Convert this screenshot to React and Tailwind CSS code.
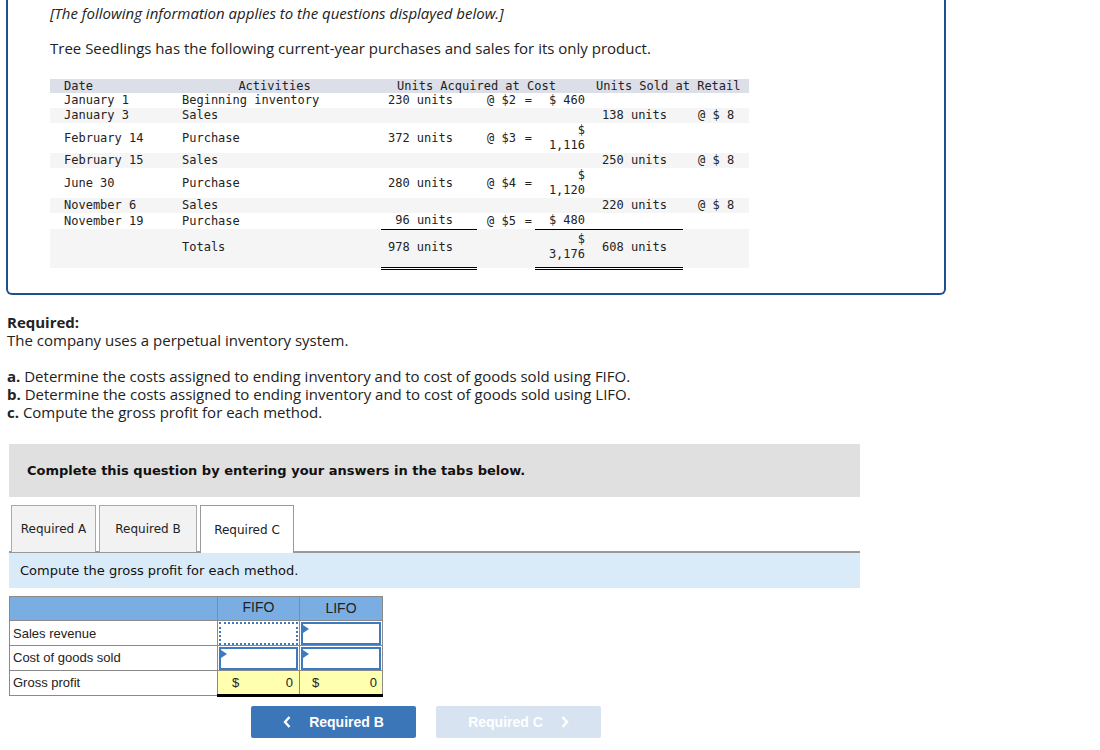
import React from 'react';

const mono = "font-['DejaVu_Sans_Mono',monospace] text-[12px] leading-[15px] text-[#222]";

const rows = [
  { date: 'January 1', act: 'Beginning inventory', units: '230 units', at: '@ $2', cost: ['$ 460'], h: 'h-[15px]', bg: 'bg-white' },
  { date: 'January 3', act: 'Sales', sold: '138 units', retail: '@ $ 8', h: 'h-[15px]', bg: 'bg-[#f5f5f5]' },
  { date: 'February 14', act: 'Purchase', units: '372 units', at: '@ $3', cost: ['$', '1,116'], h: 'h-[30px]', bg: 'bg-white' },
  { date: 'February 15', act: 'Sales', sold: '250 units', retail: '@ $ 8', h: 'h-[15px]', bg: 'bg-[#f5f5f5]' },
  { date: 'June 30', act: 'Purchase', units: '280 units', at: '@ $4', cost: ['$', '1,120'], h: 'h-[30px]', bg: 'bg-white' },
  { date: 'November 6', act: 'Sales', sold: '220 units', retail: '@ $ 8', h: 'h-[15px]', bg: 'bg-[#f5f5f5]' },
  { date: 'November 19', act: 'Purchase', units: '96 units', at: '@ $5', cost: ['$ 480'], h: 'h-[16px]', bg: 'bg-white', line: true },
];

function DataTable() {
  return (
    <table className={`${mono} border-collapse table-fixed w-[699px]`}>
      <colgroup>
        <col className="w-[126px]" />
        <col className="w-[205px]" />
        <col className="w-[96px]" />
        <col className="w-[58px]" />
        <col className="w-[56px]" />
        <col className="w-[92px]" />
        <col className="w-[66px]" />
      </colgroup>
      <tbody>
        <tr className="bg-[#dcdfe8] h-[14px]">
          <td className="pl-[14px] leading-[14px]">Date</td>
          <td className="text-center pr-[8px] leading-[14px]">Activities</td>
          <td colSpan={3} className="pl-[16px] leading-[14px]">Units Acquired at Cost</td>
          <td colSpan={2} className="pl-[5px] leading-[14px]">Units Sold at Retail</td>
        </tr>
        {rows.map((r, i) => (
          <tr key={i} className={`${r.bg} ${r.h}`}>
            <td className="pl-[14px] align-middle">{r.date}</td>
            <td className="pl-[6px] align-middle">{r.act}</td>
            <td className={`text-right pr-[24px] align-middle ${r.line ? 'border-b border-black' : ''}`}>{r.units}</td>
            <td className="align-middle">
              {r.at && (
                <div className="flex justify-between pl-[10px] pr-[3px]">
                  <span>{r.at}</span>
                  <span>=</span>
                </div>
              )}
            </td>
            <td className={`text-right pr-[6px] align-middle ${r.line ? 'border-b border-black' : ''}`}>
              {r.cost && r.cost.map((c, j) => <div key={j}>{c}</div>)}
            </td>
            <td className={`pl-[11px] align-middle ${r.line ? 'border-b border-black' : ''}`}>{r.sold}</td>
            <td className="pl-[15px] align-middle">{r.retail}</td>
          </tr>
        ))}
        <tr className="bg-[#f5f5f5] h-[39px]">
          <td></td>
          <td className="pl-[6px] align-middle pb-[2px]">Totals</td>
          <td className="text-right pr-[24px] align-middle pb-[2px] border-b-[3px] border-double border-black">978 units</td>
          <td></td>
          <td className="text-right pr-[6px] align-middle pb-[2px] border-b-[3px] border-double border-black">
            <div>$</div>
            <div>3,176</div>
          </td>
          <td className="pl-[11px] align-middle pb-[2px] border-b-[3px] border-double border-black">608 units</td>
          <td></td>
        </tr>
      </tbody>
    </table>
  );
}

function Triangle() {
  return <span className="absolute top-[1px] left-0 w-0 h-0 border-y-[4px] border-y-transparent border-l-[6px] border-l-[#3d7abf]" />;
}

function InputCell({ dotted, arrow }) {
  return (
    <td className="border border-[#8a8a8a] p-0 h-[25px]">
      <div className={`relative h-[23px] mx-px border-2 ${dotted ? 'border-dotted' : 'border-solid'} border-[#3d7abf] bg-white`}>
        {arrow && <Triangle />}
      </div>
    </td>
  );
}

function AnswerTable() {
  return (
    <table className="border-collapse table-fixed w-[373px] font-['Liberation_Sans',Arial,sans-serif] text-[13px] text-[#222]">
      <colgroup>
        <col className="w-[208px]" />
        <col className="w-[82px]" />
        <col className="w-[83px]" />
      </colgroup>
      <tbody>
        <tr className="bg-[#7aaee3] h-[24px]">
          <td className="border border-[#8a8a8a]"></td>
          <td className="border border-[#8a8a8a] text-center align-middle pb-[2px] text-[14px]">FIFO</td>
          <td className="border border-[#8a8a8a] text-center align-middle text-[14px]">LIFO</td>
        </tr>
        <tr>
          <td className="border border-[#8a8a8a] pl-[3px] pt-[1px] leading-[20px]">Sales revenue</td>
          <InputCell dotted />
          <InputCell arrow />
        </tr>
        <tr>
          <td className="border border-[#8a8a8a] pl-[3px] leading-[20px]">Cost of goods sold</td>
          <InputCell arrow />
          <InputCell arrow />
        </tr>
        <tr className="h-[25px]">
          <td className="border border-[#8a8a8a] pl-[3px] leading-[20px]">Gross profit</td>
          <td className="border border-[#8a8a8a] bg-[#ffffb0] p-0 border-b-[3px] border-b-black border-b-double">
            <div className="flex justify-between pl-[14px] pr-[6px]">
              <span>$</span>
              <span>0</span>
            </div>
          </td>
          <td className="border border-[#8a8a8a] bg-[#ffffb0] p-0 border-b-[3px] border-b-black border-b-double">
            <div className="flex justify-between pl-[12px] pr-[5px]">
              <span>$</span>
              <span>0</span>
            </div>
          </td>
        </tr>
      </tbody>
    </table>
  );
}

export default function App() {
  return (
    <div className="bg-white w-[1100px] h-[750px] overflow-hidden font-['Open_Sans',sans-serif] text-[#222]">
      <div className="ml-[6px] w-[940px] border-2 border-t-0 border-[#1d4f8f] rounded-b-[6px] pl-[42px] pt-[3px] h-[295px]">
        <p className="italic text-[15px] leading-[20px]">[The following information applies to the questions displayed below.]</p>
        <p className="text-[15px] leading-[20px] mt-[15px]">Tree Seedlings has the following current-year purchases and sales for its only product.</p>
        <div className="mt-[21px]">
          <DataTable />
        </div>
      </div>

      <div className="pl-[7px] mt-[18px] text-[15px] leading-[18px]">
        <p className="font-bold">Required:</p>
        <p>The company uses a perpetual inventory system.</p>
        <p className="mt-[18px]"><span className="font-bold">a.</span> Determine the costs assigned to ending inventory and to cost of goods sold using FIFO.</p>
        <p><span className="font-bold">b.</span> Determine the costs assigned to ending inventory and to cost of goods sold using LIFO.</p>
        <p><span className="font-bold">c.</span> Compute the gross profit for each method.</p>
      </div>

      <div className="ml-[9px] w-[851px] mt-[23px] font-['DejaVu_Sans',Verdana,sans-serif]">
        <div className="bg-[#e0e0e0] h-[53px] flex items-center pl-[18px] text-[13px] font-bold text-[#111]">
          Complete this question by entering your answers in the tabs below.
        </div>
        <div className="flex items-end gap-[3px] pl-[2px] mt-[8px] border-b-2 border-[#999] h-[48px] text-[12px]">
          <div className="w-[85px] h-[47px] mb-[-1px] bg-[#f2f2f2] border border-[#aaa] border-b-0 flex items-center justify-center">Required A</div>
          <div className="w-[98px] h-[47px] mb-[-1px] bg-[#f2f2f2] border border-[#aaa] border-b-0 flex items-center justify-center">Required B</div>
          <div className="w-[94px] h-[48px] mb-[-2px] bg-white border border-[#999] border-b-0 flex items-center justify-center">Required C</div>
        </div>
        <div className="bg-[#d9ebf9] h-[35px] flex items-center pl-[11px] text-[13px] text-[#111]">
          Compute the gross profit for each method.
        </div>
        <div className="mt-[8px]">
          <AnswerTable />
        </div>
        <div className="flex gap-[20px] ml-[242px] mt-[9px]">
          <button className="w-[165px] h-[32px] rounded-[2px] bg-[#3a76b8] text-white font-['Liberation_Sans',Arial,sans-serif] font-bold text-[14px] flex items-center justify-center gap-[18px]">
            <svg width="8" height="12" viewBox="0 0 8 12"><path d="M6.5 1 L2 6 L6.5 11" fill="none" stroke="white" strokeWidth="2.4" /></svg>
            <span>Required B</span>
          </button>
          <button className="w-[165px] h-[32px] rounded-[2px] bg-[#d7e3f1] text-white font-['Liberation_Sans',Arial,sans-serif] font-bold text-[14px] flex items-center justify-center gap-[18px]">
            <span>Required C</span>
            <svg width="8" height="12" viewBox="0 0 8 12"><path d="M1.5 1 L6 6 L1.5 11" fill="none" stroke="white" strokeWidth="2.4" /></svg>
          </button>
        </div>
      </div>
    </div>
  );
}
